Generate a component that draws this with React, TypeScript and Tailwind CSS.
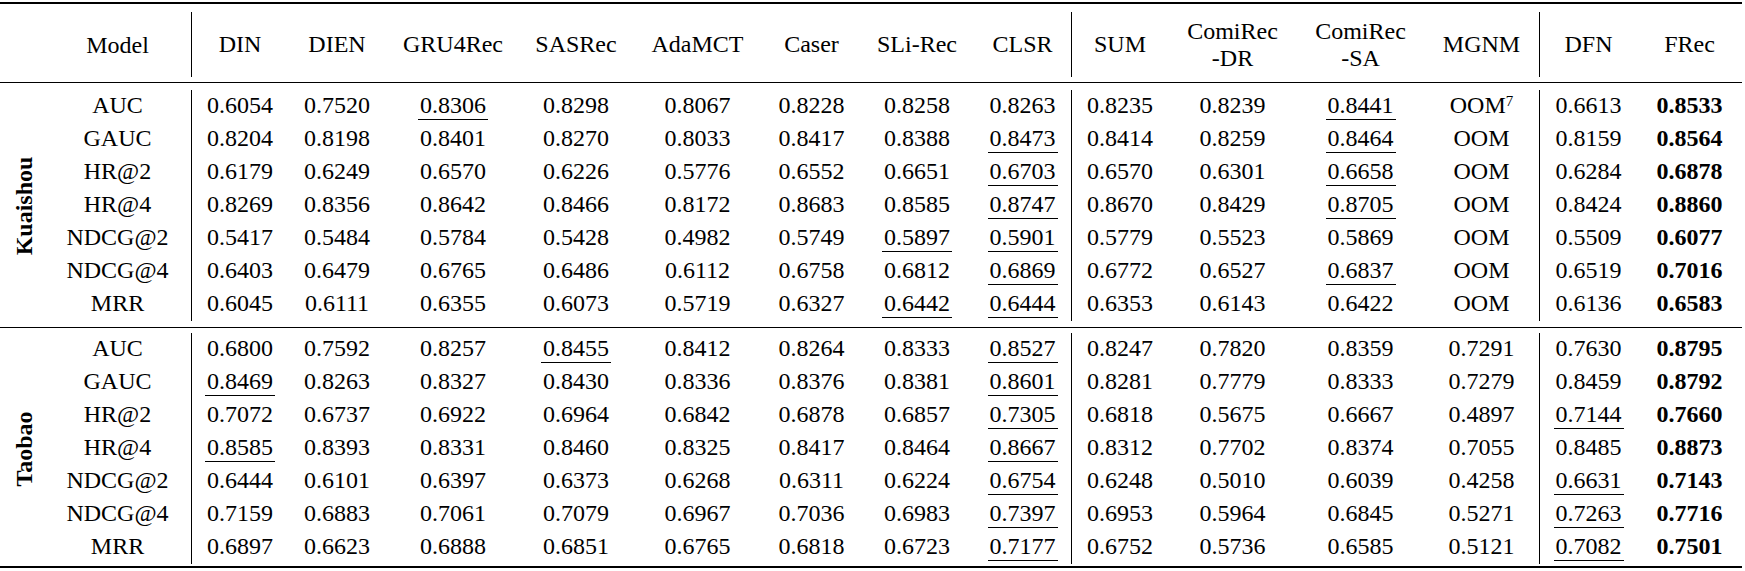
import React from "react";

// "_" prefix = underlined (second best), "*" prefix = bold (best)
const models = [
  ["DIN"],
  ["DIEN"],
  ["GRU4Rec"],
  ["SASRec"],
  ["AdaMCT"],
  ["Caser"],
  ["SLi-Rec"],
  ["CLSR"],
  ["SUM"],
  ["ComiRec", "-DR"],
  ["ComiRec", "-SA"],
  ["MGNM"],
  ["DFN"],
  ["FRec"],
];

const metrics = ["AUC", "GAUC", "HR@2", "HR@4", "NDCG@2", "NDCG@4", "MRR"];

const datasets = [
  {
    name: "Kuaishou",
    rows: [
      ["0.6054", "0.7520", "_0.8306", "0.8298", "0.8067", "0.8228", "0.8258", "0.8263", "0.8235", "0.8239", "_0.8441", "OOM7", "0.6613", "*0.8533"],
      ["0.8204", "0.8198", "0.8401", "0.8270", "0.8033", "0.8417", "0.8388", "_0.8473", "0.8414", "0.8259", "_0.8464", "OOM", "0.8159", "*0.8564"],
      ["0.6179", "0.6249", "0.6570", "0.6226", "0.5776", "0.6552", "0.6651", "_0.6703", "0.6570", "0.6301", "_0.6658", "OOM", "0.6284", "*0.6878"],
      ["0.8269", "0.8356", "0.8642", "0.8466", "0.8172", "0.8683", "0.8585", "_0.8747", "0.8670", "0.8429", "_0.8705", "OOM", "0.8424", "*0.8860"],
      ["0.5417", "0.5484", "0.5784", "0.5428", "0.4982", "0.5749", "_0.5897", "_0.5901", "0.5779", "0.5523", "0.5869", "OOM", "0.5509", "*0.6077"],
      ["0.6403", "0.6479", "0.6765", "0.6486", "0.6112", "0.6758", "0.6812", "_0.6869", "0.6772", "0.6527", "_0.6837", "OOM", "0.6519", "*0.7016"],
      ["0.6045", "0.6111", "0.6355", "0.6073", "0.5719", "0.6327", "_0.6442", "_0.6444", "0.6353", "0.6143", "0.6422", "OOM", "0.6136", "*0.6583"],
    ],
  },
  {
    name: "Taobao",
    rows: [
      ["0.6800", "0.7592", "0.8257", "_0.8455", "0.8412", "0.8264", "0.8333", "_0.8527", "0.8247", "0.7820", "0.8359", "0.7291", "0.7630", "*0.8795"],
      ["_0.8469", "0.8263", "0.8327", "0.8430", "0.8336", "0.8376", "0.8381", "_0.8601", "0.8281", "0.7779", "0.8333", "0.7279", "0.8459", "*0.8792"],
      ["0.7072", "0.6737", "0.6922", "0.6964", "0.6842", "0.6878", "0.6857", "_0.7305", "0.6818", "0.5675", "0.6667", "0.4897", "_0.7144", "*0.7660"],
      ["_0.8585", "0.8393", "0.8331", "0.8460", "0.8325", "0.8417", "0.8464", "_0.8667", "0.8312", "0.7702", "0.8374", "0.7055", "0.8485", "*0.8873"],
      ["0.6444", "0.6101", "0.6397", "0.6373", "0.6268", "0.6311", "0.6224", "_0.6754", "0.6248", "0.5010", "0.6039", "0.4258", "_0.6631", "*0.7143"],
      ["0.7159", "0.6883", "0.7061", "0.7079", "0.6967", "0.7036", "0.6983", "_0.7397", "0.6953", "0.5964", "0.6845", "0.5271", "_0.7263", "*0.7716"],
      ["0.6897", "0.6623", "0.6888", "0.6851", "0.6765", "0.6818", "0.6723", "_0.7177", "0.6752", "0.5736", "0.6585", "0.5121", "_0.7082", "*0.7501"],
    ],
  },
];

const cols =
  "grid grid-cols-[147px_97px_98px_134px_112px_131px_97px_114px_97px_97px_129px_127px_115px_98px_105px]";

// columns that start a new block get the vertical rule
const ruled = [0, 8, 12];

function Value({ v }: { v: string }) {
  const underline = v.startsWith("_");
  const bold = v.startsWith("*");
  const text = underline || bold ? v.slice(1) : v;
  if (text === "OOM7") {
    return (
      <span className="inline-block leading-none pb-[2px] border-b border-transparent">
        OOM<sup className="text-[15px]">7</sup>
      </span>
    );
  }
  return (
    <span
      className={`inline-block leading-none pb-[2px] px-[2px] border-b ${
        underline ? "border-black" : "border-transparent"
      } ${bold ? "font-bold" : ""}`}
    >
      {text}
    </span>
  );
}

export default function App() {
  return (
    <div className="w-[1745px] h-[571px] bg-white text-black [font-family:Liberation_Serif,serif] text-[24px] pt-[2px]">
      <div className="w-[1742px]">
        {/* top rule */}
        <div className="h-[2px] bg-black" />

        {/* header */}
        <div className="flex mt-[8px] h-[65px]">
          <div className="w-[44px]" />
          <div className={cols}>
            <div className="flex items-center justify-center">Model</div>
            {models.map((m, i) => (
              <div
                key={m.join("")}
                className={`flex flex-col items-center justify-center leading-[27px] ${
                  ruled.includes(i) ? "border-l border-black" : ""
                }`}
              >
                {m.map((line) => (
                  <span key={line}>{line}</span>
                ))}
              </div>
            ))}
          </div>
        </div>

        <div className="h-px bg-black mt-[5px]" />

        {datasets.map((ds, di) => (
          <div key={ds.name}>
            {di > 0 && <div className="h-px bg-black mt-[6px]" />}
            <div className={`flex ${di === 0 ? "mt-[7px]" : "mt-[5px]"}`}>
              <div className="w-[44px] flex items-center justify-center pl-1">
                <span className="-rotate-90 whitespace-nowrap font-bold">{ds.name}</span>
              </div>
              <div>
                {ds.rows.map((row, ri) => (
                  <div key={metrics[ri]} className={`${cols} h-[33px]`}>
                    <div className="flex items-center justify-center">
                      <span className="inline-block leading-none pb-[2px] border-b border-transparent">
                        {metrics[ri]}
                      </span>
                    </div>
                    {row.map((v, ci) => (
                      <div
                        key={ci}
                        className={`flex items-center justify-center ${
                          ruled.includes(ci) ? "border-l border-black" : ""
                        }`}
                      >
                        <Value v={v} />
                      </div>
                    ))}
                  </div>
                ))}
              </div>
            </div>
          </div>
        ))}

        {/* bottom rule */}
        <div className="h-[2px] bg-black mt-[2px]" />
      </div>
    </div>
  );
}
